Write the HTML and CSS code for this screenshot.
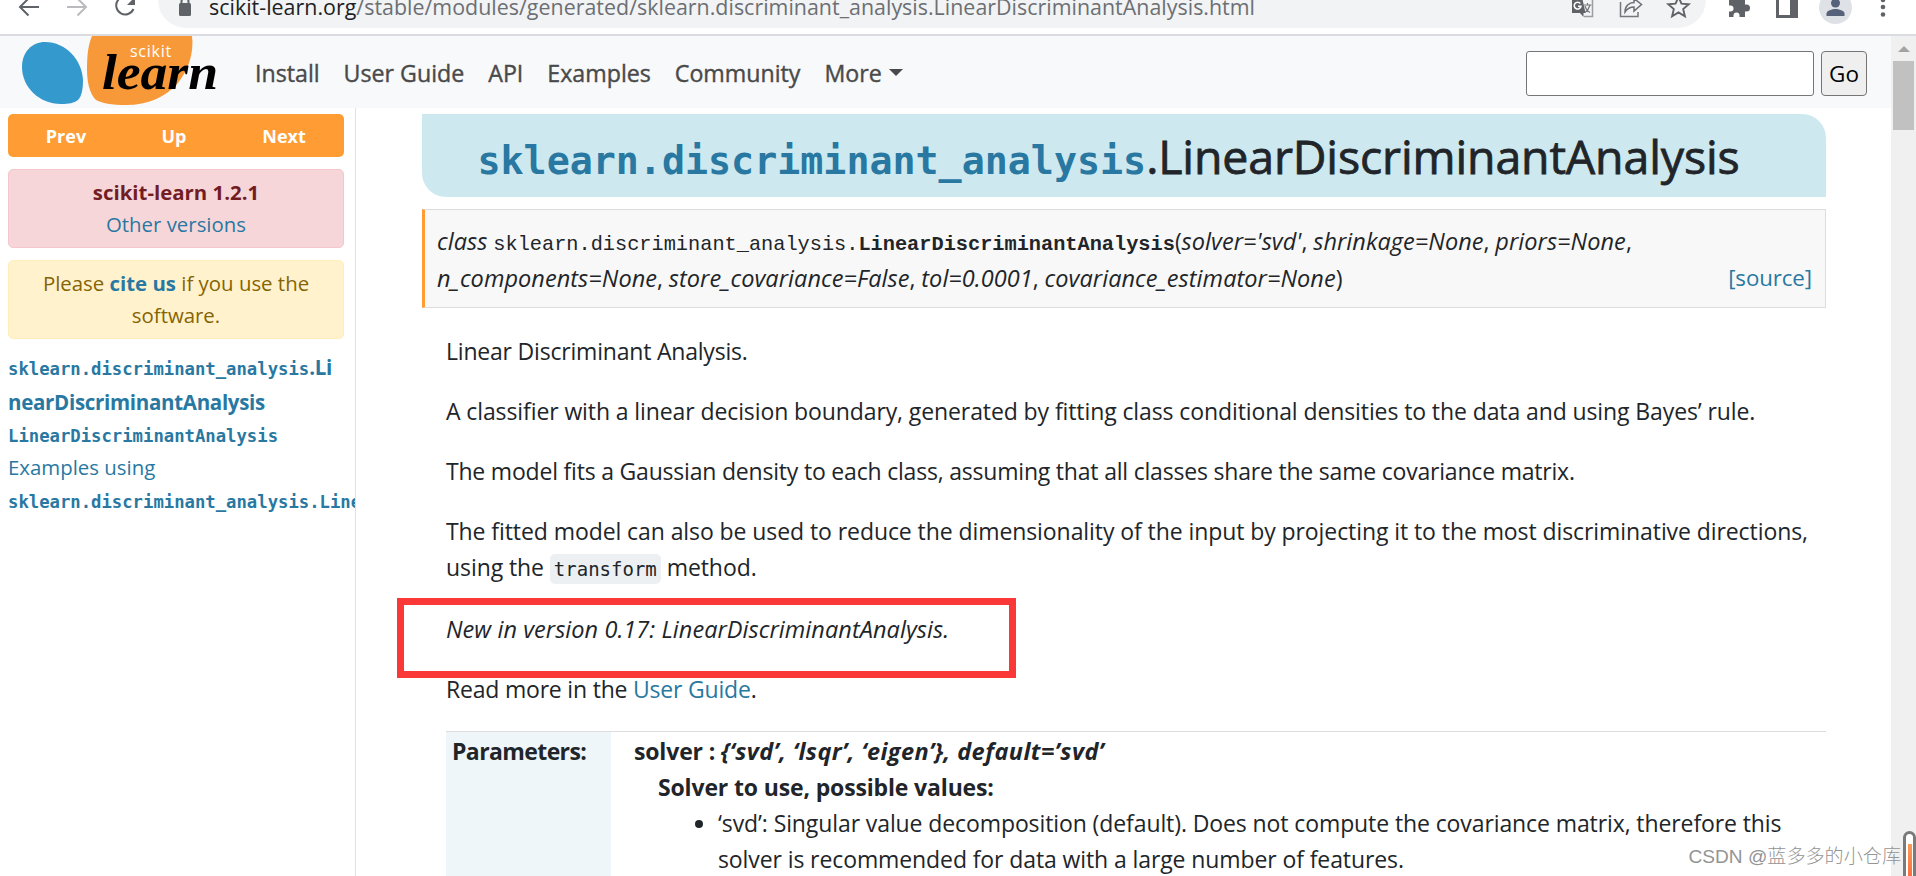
FILE: index.html
```html
<!DOCTYPE html>
<html lang="en">

<head>
    <meta charset="UTF-8">
    <meta name="viewport" content="width=device-width, initial-scale=1.0">
    <title>sklearn.discriminant_analysis.LinearDiscriminantAnalysis</title>
    <link rel="stylesheet" href="styles.css">
</head>

<body>
    <div class="browser-bar">
        <svg class="browser-nav" width="158" height="34" viewBox="0 0 158 34" fill="none" stroke="#5f6368" stroke-width="2">
            <path d="M39 7H20M28.500-1.500L20 7l8.500 8.500" />
            <path stroke="#b9bbbe" d="M67 7h19M77.500-1.500L86 7l-8.500 8.500" />
            <path d="M131-1.500A9 9 0 1 0 133.500 9" />
            <path fill="#5f6368" stroke="none" d="M135-3v8h-8z" />
        </svg>
        <div class="omnibox">
            <svg class="lock" width="14" height="20" viewBox="0 0 14 20">
                <path d="M3.500 7V4.500a3.500 3.500 0 0 1 7 0V7" fill="none" stroke="#5f6368" stroke-width="2" />
                <rect x="1" y="6" width="12" height="13" rx="1.500" fill="#5f6368" />
            </svg>
            <span class="url"><b>scikit-learn.org</b>/stable/modules/generated/sklearn.discriminant_analysis.LinearDiscriminantAnalysis.html</span>
            <svg class="omnibox-icons" width="120" height="28" viewBox="0 0 120 28">
                <path d="M10-3h10.500v19.500H12" fill="none" stroke="#9a9da1" stroke-width="1.500" />
                <path fill="#5f6368" d="M0-3h10l3.500 16h-2v4l-3.500-4H0z" />
                <path d="M8.300 3.500A3.400 3.400 0 1 0 9 6.200H6" fill="none" stroke="#fff" stroke-width="1.600" />
                <path d="M11.500 5h8M15.500 3v2M18 5c-1 4-3 6-5 7.500M13 6c1 3 3 5.500 5 6.500" fill="none" stroke="#74777b" stroke-width="1.200" />
                <path d="M48.500 2v14.500H66V12" fill="none" stroke="#74777b" stroke-width="1.500" />
                <path d="M53 12c0-6 4-9.500 9-9.500v-4l7.500 6-7.500 6.500V7c-4 0-7 2-9 5z" fill="none" stroke="#6b6e73" stroke-width="1.500" />
                <path d="M106.500-3l3 6.700 7.200.6-5.500 4.800 1.700 7.100-6.400-3.800-6.400 3.800 1.700-7.100-5.500-4.800 7.200-.6z" fill="none" stroke="#5f6368" stroke-width="1.900" />
            </svg>
        </div>
        <svg class="browser-tools" width="210" height="34" viewBox="0 0 210 34" fill="#5f6368">
            <path d="M23-2h16v6.500h1.500a3.500 3.500 0 0 1 0 7H39V17h-5.500v-1.500a3 3 0 0 0-6 0V17H23v-5.500h1.500a3 3 0 0 0 0-6H23z" />
            <path d="M70-3h22v21H70z" />
            <path fill="#fff" d="M73-3h11v18H73z" />
            <circle cx="129.500" cy="7.500" r="16.500" fill="#dee1e6" />
            <circle cx="129.500" cy="3" r="4.500" fill="#56617a" />
            <path fill="#56617a" d="M120.500 16v-2.500c0-3 6-4.500 9-4.500s9 1.500 9 4.500V16z" />
            <circle cx="177" cy="0" r="2.300" />
            <circle cx="177" cy="7" r="2.300" />
            <circle cx="177" cy="14.500" r="2.300" />
        </svg>
    </div>

    <div class="viewport">
        <div class="page">
            <nav class="navbar">
                <svg class="logo" width="220" height="72" viewBox="0 0 220 72">
                    <path fill="#3499cd" d="M45 6C32 6 22 16 22 31c0 20 17 37 39 37 8 0 13-1 17-4 4-4 5-12 5-20C82 24 66 6 45 6z" />
                    <path fill="#f89939" d="M92 0h100c2 16-3 33-14 47-12 14-30 22-52 22-14 0-25-2-30-5-7-7-9-19-9-31 0-13 1-24 5-33z" />
                    <text class="logo-scikit" x="130" y="21" textLength="41">scikit</text>
                    <text class="logo-learn" x="102" y="53" textLength="116" lengthAdjust="spacingAndGlyphs">learn</text>
                </svg>
                <div class="nav-links">
                    <a>Install</a>
                    <a>User Guide</a>
                    <a>API</a>
                    <a>Examples</a>
                    <a>Community</a>
                    <a class="dropdown">More</a>
                </div>
                <form class="search">
                    <input type="text">
                    <button type="button">Go</button>
                </form>
            </nav>

            <div class="columns">
                <aside class="sidebar">
                    <div class="rellinks">
                        <a>Prev</a>
                        <a>Up</a>
                        <a>Next</a>
                    </div>
                    <div class="alert alert-danger">
                        <strong>scikit-learn 1.2.1</strong><br>
                        <a>Other versions</a>
                    </div>
                    <div class="alert alert-warning">
                        Please <a><b>cite us</b></a> if you use the<br>software.
                    </div>
                    <div class="toc">
                        <a class="toc-title"><code>sklearn.discriminant_analysis</code>.Li<br>nearDiscriminantAnalysis</a>
                        <a><code>LinearDiscriminantAnalysis</code></a>
                        <a>Examples using</a>
                        <a><code>sklearn.discriminant_analysis.LinearDiscriminantAnalysis</code></a>
                    </div>
                </aside>

                <main class="content">
                    <h1><code>sklearn.discriminant_analysis</code>.LinearDiscriminantAnalysis</h1>

                    <div class="signature">
                        <div><em>class</em> <code>sklearn.discriminant_analysis.<b>LinearDiscriminantAnalysis</b></code>(<em>solver='svd'</em>, <em>shrinkage=None</em>, <em>priors=None</em>,</div>
                        <div class="sig-row">
                            <span><em>n_components=None</em>, <em>store_covariance=False</em>, <em>tol=0.0001</em>, <em>covariance_estimator=None</em>)</span>
                            <a>[source]</a>
                        </div>
                    </div>

                    <div class="description">
                        <p class="summary">Linear Discriminant Analysis.</p>
                        <p>A classifier with a linear decision boundary, generated by fitting class conditional densities to the data and using Bayes’ rule.</p>
                        <p class="summary">The model fits a Gaussian density to each class, assuming that all classes share the same covariance matrix.</p>
                        <p class="fitted">The fitted model can also be used to reduce the dimensionality of the input by projecting it to the most discriminative directions,<br>using the <code>transform</code> method.</p>
                        <p class="version-added"><em>New in version 0.17: LinearDiscriminantAnalysis.</em></p>
                        <p class="summary">Read more in the <a>User Guide</a>.</p>

                        <div class="field-list">
                            <div class="field-name">Parameters:</div>
                            <div class="field-body">
                                <div class="param"><b>solver : <em>{‘svd’, ‘lsqr’, ‘eigen’}, default=’svd’</em></b></div>
                                <div class="param-desc">
                                    <b>Solver to use, possible values:</b>
                                    <ul>
                                        <li>‘svd’: Singular value decomposition (default). Does not compute the covariance matrix, therefore this<br>solver is recommended for data with a large number of features.</li>
                                    </ul>
                                </div>
                            </div>
                        </div>
                    </div>
                </main>
            </div>
        </div>
        <div class="scrollbar">
            <div class="scroll-up"></div>
            <div class="scroll-thumb"></div>
        </div>
    </div>

    <div class="watermark">CSDN @蓝多多的小仓库</div>
    <div class="side-pill"></div>
</body>

</html>
```

FILE: styles.css
```css
*,
*::before,
*::after {
    margin: 0;
    padding: 0;
    box-sizing: border-box;
}

body {
    height: 876px;
    overflow: hidden;
    background: #fff;
    color: #212529;
    font-family: "Open Sans", "Noto Sans", sans-serif;
    font-size: 23px;
    line-height: 36px;
    letter-spacing: -0.1px;
    white-space: nowrap;
}

a {
    color: #2878a2;
    text-decoration: none;
}

code {
    font-family: "DejaVu Sans Mono", monospace;
    letter-spacing: 0;
}

em {
    font-size: 23.5px;
    letter-spacing: 0.06px;
}

/* browser chrome */
.browser-bar {
    display: flex;
    height: 36px;
    border-bottom: 2px solid #dadcdf;
    overflow: hidden;
}

.browser-bar svg {
    flex: none;
}

.omnibox {
    display: flex;
    width: 1548px;
    height: 28px;
    padding-left: 20px;
    background: #f1f3f4;
    border-radius: 0 0 28px 28px;
}

.lock {
    margin-top: -3px;
}

.url {
    flex: 1;
    margin: -11px 0 0 17px;
    color: #6c6f73;
    font-size: 21.4px;
    letter-spacing: 0.02px;
}

.url b {
    color: #202124;
    font-weight: 400;
}

.omnibox-icons {
    margin-right: 14px;
}

.viewport {
    display: flex;
    height: 840px;
}

.page {
    width: 1891px;
}

/* navbar */
.navbar {
    display: flex;
    height: 72px;
    background: #f8f9fb;
}

.logo-scikit {
    fill: #fff;
    font-size: 16px;
}

.logo-learn {
    fill: #000;
    font-family: "Liberation Serif", serif;
    font-size: 50px;
    font-style: italic;
    font-weight: 700;
}

.nav-links {
    display: flex;
    flex: 1;
    gap: 24px;
    margin-left: 35px;
    padding-top: 19px;
}

.nav-links a {
    color: #4a4a4a;
    font-size: 23.2px;
    font-weight: 500;
    letter-spacing: 0;
    -webkit-text-stroke: 0.4px;
}

.dropdown::after {
    content: "";
    display: inline-block;
    margin-left: 7px;
    vertical-align: 6px;
    border-top: 7px solid;
    border-left: 7px solid transparent;
    border-right: 7px solid transparent;
}

.search {
    display: flex;
    gap: 7px;
    margin: 15px 24px 0 0;
}

.search input {
    width: 288px;
    height: 45px;
    background: #fff;
    border: 1px solid #767676;
    border-radius: 3px;
}

.search button {
    width: 46px;
    height: 45px;
    background: #efefef;
    border: 1px solid #767676;
    border-radius: 4px;
    color: #000;
    font: 22.5px "Open Sans", sans-serif;
    text-align: center;
}

.columns {
    display: flex;
    height: 768px;
}

/* sidebar */
.sidebar {
    width: 356px;
    padding: 6px 11px 0 8px;
    border-right: 1px solid #dee2e6;
    overflow: hidden;
    font-size: 20.4px;
    line-height: 32px;
    letter-spacing: 0;
}

.rellinks {
    display: grid;
    grid-template-columns: 116px 1fr 120px;
    height: 43px;
    margin-bottom: 12px;
    background: #ff9c34;
    border-radius: 5px;
    line-height: 44px;
    text-align: center;
}

.rellinks a {
    color: #fff;
    font-size: 18px;
    font-weight: 700;
}

.alert {
    height: 79px;
    margin-bottom: 12px;
    padding-top: 6px;
    border: 1px solid;
    border-radius: 5px;
    text-align: center;
}

.alert-danger {
    background: #f7d6d9;
    border-color: #f5c6cb;
    color: #721c24;
}

.alert-warning {
    background: #fff2cd;
    border-color: #ffeeba;
    color: #856404;
}

.toc a {
    display: block;
    height: 33px;
    line-height: 33px;
}

.toc code {
    font-size: 17.25px;
    font-weight: 700;
}

.toc .toc-title {
    height: 67px;
    font-size: 20.5px;
    font-weight: 700;
    letter-spacing: -0.3px;
}

/* main column */
.content {
    flex: 1;
    padding: 6px 65px 0 66px;
}

h1 {
    height: 83px;
    padding-right: 31px;
    background: #cee8ef;
    border-radius: 0 24px;
    font-size: 46.5px;
    font-weight: 500;
    letter-spacing: -0.15px;
    line-height: 84px;
    text-align: center;
    -webkit-text-stroke: 0.8px;
}

h1 code {
    color: #2878a2;
    font-size: 38.3px;
    font-weight: 700;
    -webkit-text-stroke: 0;
}

.signature {
    height: 99px;
    margin-top: 12px;
    padding: 13px 13px 0 12px;
    background: #f8f8f8;
    border: 1px solid #ddd;
    border-left: 3px solid #ff9c34;
}

.signature div {
    height: 37px;
}

.signature code {
    font-family: "Liberation Mono", monospace;
    font-size: 20.3px;
}

.signature a {
    font-size: 22.3px;
}

.sig-row {
    display: flex;
    justify-content: space-between;
}

.description {
    margin: 25px 0 0 24px;
}

.description p {
    margin-bottom: 24px;
}

.description .summary {
    letter-spacing: -0.2px;
}

.description .fitted {
    height: 74px;
    letter-spacing: -0.08px;
}

.fitted code {
    padding: 4px 4px;
    background: #ecf0f3;
    border-radius: 5px;
    font-size: 19px;
}

.version-added {
    position: relative;
}

.version-added::after {
    content: "";
    position: absolute;
    top: -13px;
    left: -49px;
    width: 619px;
    height: 80px;
    border: 7px solid #fb3838;
}

.field-list {
    display: flex;
    height: 150px;
    margin-top: 21px;
    border-top: 1px solid #ddd;
}

.field-name {
    width: 165px;
    padding: 1px 6px;
    background: #eef6f9;
    font-weight: 700;
    letter-spacing: -0.6px;
}

.field-body {
    padding: 1px 0 0 23px;
}

.field-body b {
    letter-spacing: -0.15px;
}

.field-body em {
    letter-spacing: 0.45px;
}

.param-desc {
    padding-left: 24px;
}

.param-desc ul {
    padding-left: 60px;
}

/* scrollbar */
.scrollbar {
    width: 25px;
    padding: 10px 2px 0;
    background: #f0f0f0;
}

.scroll-up {
    width: 0;
    margin: 0 auto 9px;
    border: 6px solid transparent;
    border-top: 0;
    border-bottom-color: #a3a3a3;
}

.scroll-thumb {
    height: 69px;
    background: #c1c1c1;
}

.watermark {
    position: absolute;
    right: 15px;
    bottom: 3px;
    color: #949494;
    font-family: "Liberation Sans", "Noto Sans CJK SC", sans-serif;
    font-size: 19.1px;
    font-weight: 300;
    line-height: 32px;
    letter-spacing: 0;
}

.side-pill {
    position: absolute;
    right: 0;
    bottom: -20px;
    width: 13px;
    height: 65px;
    background: linear-gradient(#ff9a55, #fc5531 50px) center 10px / 4px 60px no-repeat #fff;
    border: 3px solid #7a7a7a;
    border-radius: 7px;
}
```
